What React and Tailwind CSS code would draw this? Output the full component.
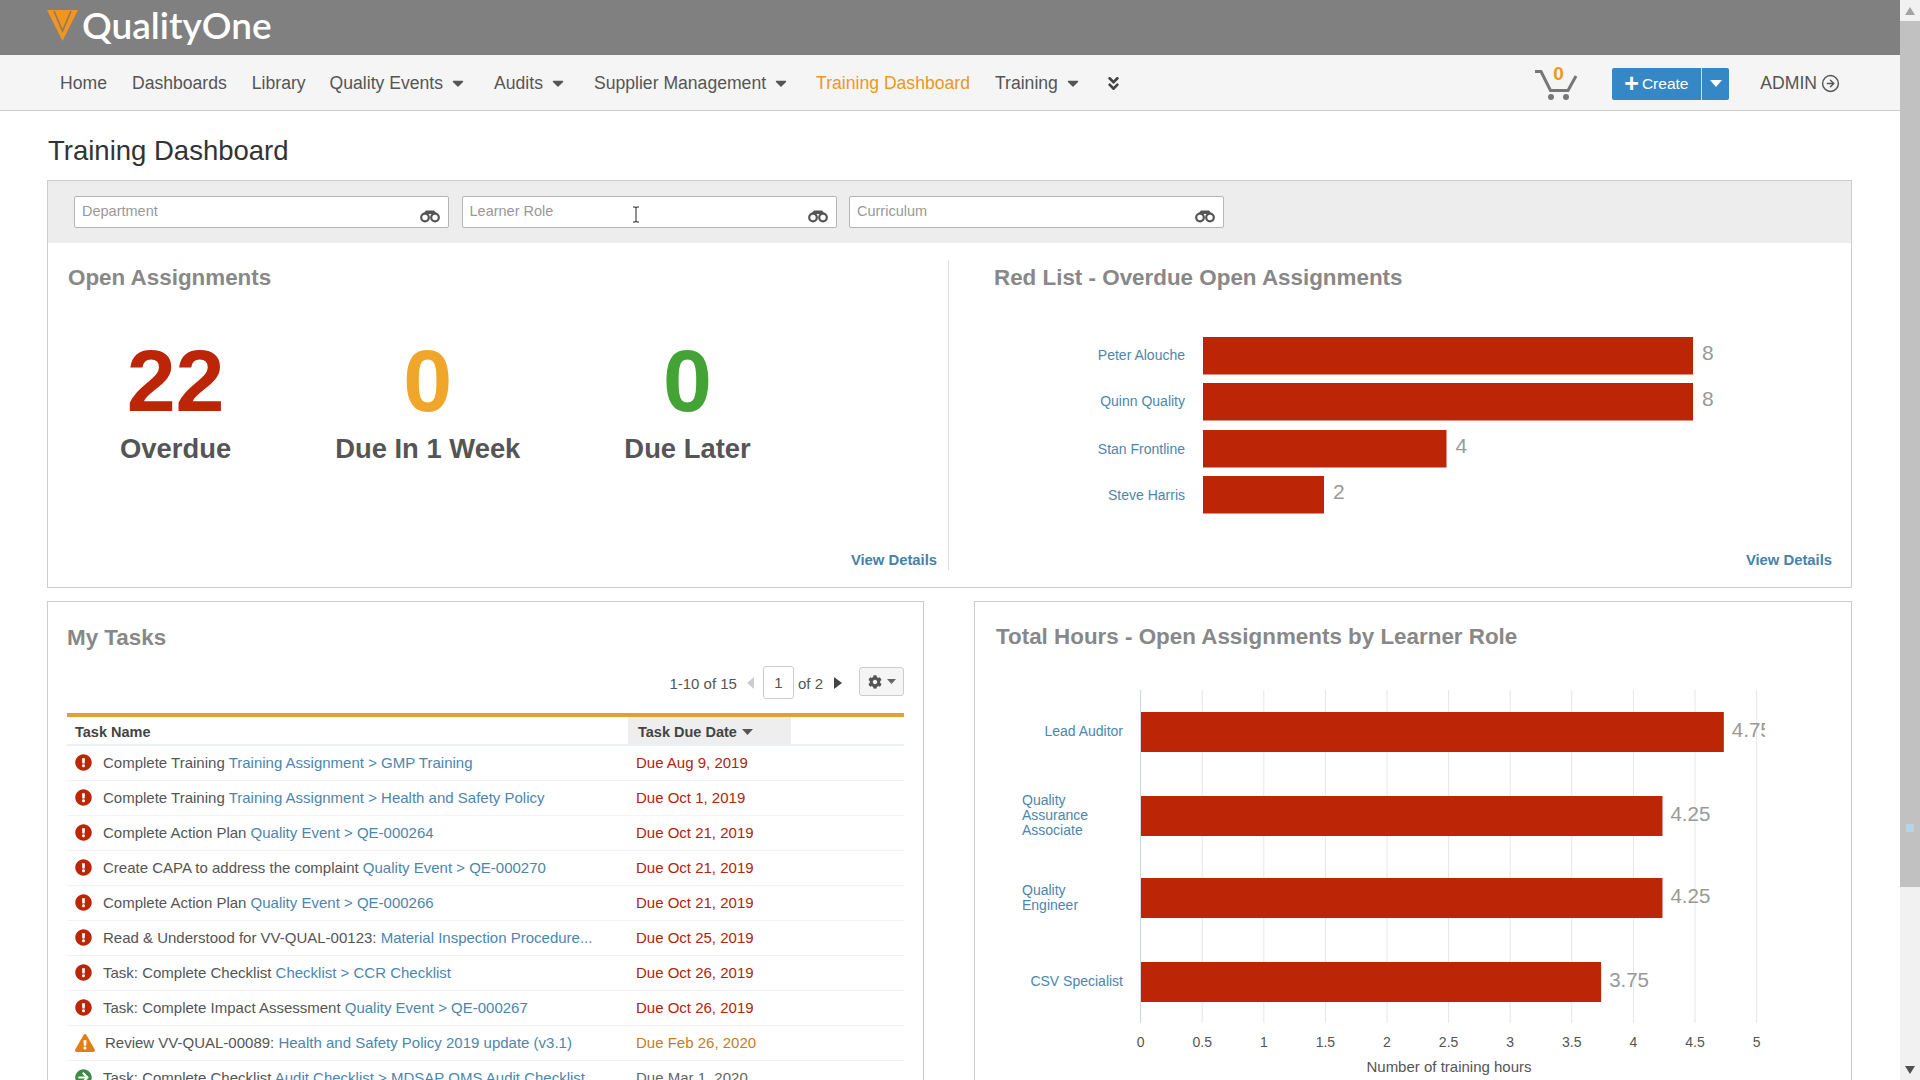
import React from 'react';
import { CircleArrowRight } from 'lucide-react';
import { FaCog, FaExclamationCircle, FaExclamationTriangle, FaArrowCircleRight, FaAngleDoubleDown, FaCaretDown } from 'react-icons/fa';

const navItems = [
  { label: 'Home', gap: 'mr-[25px]' },
  { label: 'Dashboards', gap: 'mr-[25px]' },
  { label: 'Library', gap: 'mr-[24px]' },
  { label: 'Quality Events', caret: true, gap: 'mr-[27px]' },
  { label: 'Audits', caret: true, gap: 'mr-[27px]' },
  { label: 'Supplier Management', caret: true, gap: 'mr-[26px]' },
  { label: 'Training Dashboard', active: true, gap: 'mr-[25px]' },
  { label: 'Training', caret: true, gap: 'mr-[23px]' },
];

const tasks = [
  { icon: 'red', text: 'Complete Training ', link: 'Training Assignment > GMP Training', due: 'Due Aug 9, 2019' },
  { icon: 'red', text: 'Complete Training ', link: 'Training Assignment > Health and Safety Policy', due: 'Due Oct 1, 2019' },
  { icon: 'red', text: 'Complete Action Plan ', link: 'Quality Event > QE-000264', due: 'Due Oct 21, 2019' },
  { icon: 'red', text: 'Create CAPA to address the complaint ', link: 'Quality Event > QE-000270', due: 'Due Oct 21, 2019' },
  { icon: 'red', text: 'Complete Action Plan ', link: 'Quality Event > QE-000266', due: 'Due Oct 21, 2019' },
  { icon: 'red', text: 'Read & Understood for VV-QUAL-00123: ', link: 'Material Inspection Procedure...', due: 'Due Oct 25, 2019' },
  { icon: 'red', text: 'Task: Complete Checklist ', link: 'Checklist > CCR Checklist', due: 'Due Oct 26, 2019' },
  { icon: 'red', text: 'Task: Complete Impact Assessment ', link: 'Quality Event > QE-000267', due: 'Due Oct 26, 2019' },
  { icon: 'warn', text: 'Review VV-QUAL-00089: ', link: 'Health and Safety Policy 2019 update (v3.1)', due: 'Due Feb 26, 2020' },
  { icon: 'ok', text: 'Task: Complete Checklist ', link: 'Audit Checklist > MDSAP QMS Audit Checklist', due: 'Due Mar 1, 2020' },
];

const redList = [
  { name: 'Peter Alouche', value: 8, width: 490, y: 337, labelY: 360 },
  { name: 'Quinn Quality', value: 8, width: 490, y: 383, labelY: 406 },
  { name: 'Stan Frontline', value: 4, width: 243.5, y: 430, labelY: 454 },
  { name: 'Steve Harris', value: 2, width: 121, y: 476, labelY: 500 },
];

const hours = [
  { lines: ['Lead Auditor'], value: 4.75, y: 712 },
  { lines: ['Quality', 'Assurance', 'Associate'], value: 4.25, y: 796 },
  { lines: ['Quality', 'Engineer'], value: 4.25, y: 878 },
  { lines: ['CSV Specialist'], value: 3.75, y: 962 },
];

const ticks = [0, 0.5, 1, 1.5, 2, 2.5, 3, 3.5, 4, 4.5, 5];

const Binoculars = () => (
  <svg width="20" height="14" viewBox="0 0 20 14" className="absolute right-[8px] bottom-[4px]">
    <circle cx="5" cy="8.5" r="3.8" fill="none" stroke="#555" strokeWidth="2.2" />
    <circle cx="15" cy="8.5" r="3.8" fill="none" stroke="#555" strokeWidth="2.2" />
    <path d="M3 5 L6 1.5 H14 L17 5 Z" fill="#555" />
  </svg>
);

const FilterInput = ({ label, cursor }) => (
  <div className="relative w-[375px] h-[32px] bg-white border border-[#b5b5b5] rounded-[2px] pl-[7px] text-[14.5px] leading-[29px] text-[#999]">
    {label}
    {cursor && (
      <svg width="10" height="17" viewBox="0 0 10 17" className="absolute left-[168px] top-[9px]">
        <path d="M2 1 H4.5 L5 2 L5.5 1 H8 M5 2 V15 M2 16 H4.5 L5 15 L5.5 16 H8" fill="none" stroke="#222" strokeWidth="1" />
      </svg>
    )}
    <Binoculars />
  </div>
);

const Stat = ({ value, label, color }) => (
  <div className="flex flex-col items-center">
    <div className={`text-[88px] leading-[90px] font-bold ${color}`}>{value}</div>
    <div className="text-[27.4px] leading-[32px] font-bold text-[#555] mt-[7px]">{label}</div>
  </div>
);

const TaskIcon = ({ type }) => {
  if (type === 'warn') return <FaExclamationTriangle size={20} className="text-[#e07f18] shrink-0 w-[20px] -mt-[1px]" />;
  if (type === 'ok') return <FaArrowCircleRight size={17} className="text-[#3f8a45] shrink-0 -mt-[2px]" />;
  return <FaExclamationCircle size={17} className="text-[#bd2507] shrink-0 -mt-[2px]" />;
};

function TaskRow({ task }) {
  const dueColor = task.icon === 'red' ? 'text-[#b0250a]' : task.icon === 'warn' ? 'text-[#c47d1f]' : 'text-[#666]';
  return (
    <div className="flex items-center h-[35px] border-b border-[#f3f3f3] pl-[8px] text-[15px]">
      <div className="w-[561px] flex items-center whitespace-nowrap">
        <TaskIcon type={task.icon} />
        <span className={`text-[#555] whitespace-pre ${task.icon === 'warn' ? 'ml-[10px]' : 'ml-[11px]'}`}>
          {task.text}
          <span className="text-[#4c86ae]">{task.link}</span>
        </span>
      </div>
      <span className={dueColor}>{task.due}</span>
    </div>
  );
}

function RedListChart() {
  return (
    <svg viewBox="949 291 902 240" width="902" height="240" className="block">
      {redList.map((r) => (
        <g key={r.name}>
          <text x="1185" y={r.labelY} textAnchor="end" fontSize="14" fill="#4c86ae">{r.name}</text>
          <rect x="1203" y={r.y} width={r.width} height="37.5" fill="#bd2507" />
          <text x={1203 + r.width + 9} y={r.y + 23} fontSize="21" fill="#999">{r.value}</text>
        </g>
      ))}
    </svg>
  );
}

function HoursChart() {
  return (
    <svg viewBox="975 680 876 400" width="876" height="400" className="block">
      <defs>
        <clipPath id="plot-clip"><rect x="975" y="680" width="790" height="400" /></clipPath>
      </defs>
      {ticks.map((t) => (
        <g key={t}>
          <line x1={1140.6 + t * 123.2} x2={1140.6 + t * 123.2} y1="690" y2="1023" stroke={t === 0 ? '#ccd6dc' : '#e6e6e6'} />
          <text x={1140.6 + t * 123.2} y="1047" textAnchor="middle" fontSize="14" fill="#555">{t}</text>
        </g>
      ))}
      {hours.map((h) => (
        <g key={h.y} clipPath="url(#plot-clip)">
          {h.lines.length === 1 ? (
            <text x="1123" y={h.y + 24} textAnchor="end" fontSize="14" fill="#4c86ae">{h.lines[0]}</text>
          ) : (
            h.lines.map((line, i) => (
              <text key={line} x="1022" y={h.y + 24 - (h.lines.length - 1) * 7.5 + i * 15} fontSize="14" fill="#4c86ae">{line}</text>
            ))
          )}
          <rect x="1141" y={h.y} width={h.value * 122.7} height="40" fill="#bd2507" />
          <text x={1141 + h.value * 122.7 + 8} y={h.y + 25} fontSize="20.5" fill="#999">{h.value}</text>
        </g>
      ))}
      <text x="1449" y="1072" textAnchor="middle" fontSize="15" fill="#555">Number of training hours</text>
    </svg>
  );
}

const Tri = ({ points, color, w, h }) => (
  <svg width={w} height={h} viewBox={`0 0 ${w} ${h}`} className="shrink-0"><polygon points={points} fill={color} /></svg>
);

export default function App() {
  return (
    <div className="w-[1920px] h-[1080px] overflow-hidden flex bg-white font-['Liberation_Sans',Arial,sans-serif]">
      <div className="w-[1900px] shrink-0">
        {/* top bar */}
        <div className="h-[55px] bg-[#808080] flex items-start pl-[47px] pt-[10px]">
          <svg width="32" height="32" viewBox="0 0 32 32" className="shrink-0">
            <polygon points="0,0 31,0 15.5,31" fill="#f09422" />
            <path d="M7 1 L15.5 21 L24 1" fill="none" stroke="#8a7a60" strokeWidth="1.5" />
          </svg>
          <span className="ml-[3px] -mt-[7px] text-[37px] leading-[44px] font-['Lato',sans-serif] font-semibold text-white">QualityOne</span>
        </div>

        {/* nav */}
        <div className="h-[56px] bg-[#f5f5f5] border-b border-[#ccc] flex items-center pl-[60px] pt-[2px] text-[17.6px] text-[#555]">
          {navItems.map((item) => (
            <div key={item.label} className={`flex items-center ${item.gap}`}>
              <span className={item.active ? 'text-[#f0961e]' : ''}>{item.label}</span>
              {item.caret && <FaCaretDown size={18} className="ml-[6px] text-[#555]" />}
            </div>
          ))}
          <FaAngleDoubleDown size={17} className="text-[#444]" />

          <div className="ml-auto flex items-center h-full">
            <div className="relative w-[46px] h-[34px] mr-[33px]">
              <svg width="46" height="34" viewBox="0 0 46 34">
                <path d="M2 4.5 H8 L17.5 23.5 H35 L43 9" fill="none" stroke="#777" strokeWidth="3" />
                <circle cx="18" cy="30" r="3" fill="#777" />
                <circle cx="33" cy="30" r="3" fill="#777" />
              </svg>
              <span className="absolute left-[20px] -top-[3px] text-[19px] leading-[20px] font-bold text-[#f0961e]">0</span>
            </div>
            <div className="flex h-[32px] w-[117px] rounded-[2px] bg-[#3687c5] text-white text-[15.5px]">
              <div className="flex items-center pl-[12px] w-[90px] border-r border-[#cfe2f0]">
                <span className="text-[25px] leading-[23px] font-bold mr-[3px]">+</span>Create
              </div>
              <div className="flex-1 flex items-center justify-center">
                <Tri points="0,0 12,0 6,7" color="#fff" w={12} h={7} />
              </div>
            </div>
            <span className="ml-[31px] text-[#555]">ADMIN</span>
            <CircleArrowRight size={19} strokeWidth={1.8} className="ml-[4px] mr-[60px] text-[#555]" />
          </div>
        </div>

        <h1 className="pl-[48px] pt-[23px] pb-[12px] text-[27.5px] leading-[34px] text-[#333]">Training Dashboard</h1>

        {/* open assignments */}
        <div className="ml-[47px] w-[1805px] h-[408px] border border-[#ccc]">
          <div className="h-[62px] bg-[#ededed] flex gap-[12.5px] pl-[26px] pt-[15px]">
            <FilterInput label="Department" />
            <FilterInput label="Learner Role" cursor />
            <FilterInput label="Curriculum" />
          </div>
          <div className="flex mt-[17px] h-[310px]">
            <div className="w-[901px] shrink-0 flex flex-col border-r border-[#ddd]">
              <div className="pl-[20px] pt-[4px] text-[22.4px] leading-[28px] font-bold text-[#888]">Open Assignments</div>
              <div className="flex gap-[104px] pl-[72px] mt-[44px]">
                <Stat value="22" label="Overdue" color="text-[#bd2507]" />
                <Stat value="0" label="Due In 1 Week" color="text-[#f0a62b]" />
                <Stat value="0" label="Due Later" color="text-[#43a435]" />
              </div>
              <div className="mt-auto text-right pr-[11px] text-[14.8px] leading-[20px] font-bold text-[#4682ab]">View Details</div>
            </div>
            <div className="flex-1 flex flex-col">
              <div className="pl-[45px] pt-[4px] text-[22.4px] leading-[28px] font-bold text-[#888]">Red List - Overdue Open Assignments</div>
              <div className="-mt-[1px]"><RedListChart /></div>
              <div className="mt-auto text-right pr-[19px] text-[14.8px] leading-[20px] font-bold text-[#4682ab]">View Details</div>
            </div>
          </div>
        </div>

        {/* bottom row */}
        <div className="ml-[47px] mt-[13px] flex gap-[50px]">
          <div className="w-[877px] h-[600px] border border-[#ccc] pl-[19px] pr-[19px] pt-[22px]">
            <div className="text-[22.4px] leading-[28px] font-bold text-[#888]">My Tasks</div>
            <div className="flex justify-end items-start h-[33px] mt-[14px] text-[15px] text-[#555]">
              <span className="mt-[7px]">1-10 of 15</span>
              <span className="mt-[11px] ml-[10px]"><Tri points="7,0 7,12 0,6" color="#ccc" w={7} h={12} /></span>
              <div className="ml-[9px] w-[31px] h-[33px] pt-[1px] border border-[#ccc] rounded-[3px] flex items-center justify-center">1</div>
              <span className="mt-[7px] ml-[4px]">of 2</span>
              <span className="mt-[11px] ml-[11px]"><Tri points="0,0 8,6 0,12" color="#444" w={8} h={12} /></span>
              <div className="ml-[17px] mt-[1px] w-[45px] h-[29px] border border-[#ccc] rounded-[3px] bg-[#f5f5f5] flex items-center justify-center gap-[5px]">
                <FaCog size={14} className="text-[#555]" />
                <Tri points="0,0 9,0 4.5,5" color="#666" w={9} h={5} />
              </div>
            </div>
            <div className="mt-[14px] h-[4px] bg-[#e89c34]" />
            <div className="flex h-[29px] border-b-2 border-[#eef1f3] text-[14.5px] font-bold text-[#444]">
              <div className="w-[561px] pl-[8px] leading-[30px]">Task Name</div>
              <div className="w-[163px] h-[27px] bg-[#eee] pl-[10px] pt-[2px] leading-[28px] flex items-center gap-[5px]">
                Task Due Date
                <Tri points="0,0 11,0 5.5,6" color="#555" w={11} h={6} />
              </div>
            </div>
            {tasks.map((t) => <TaskRow key={t.link} task={t} />)}
          </div>

          <div className="w-[878px] h-[600px] border border-[#ccc]">
            <div className="pl-[21px] pt-[21px] text-[22.4px] leading-[28px] font-bold text-[#888]">Total Hours - Open Assignments by Learner Role</div>
            <div className="mt-[29px]"><HoursChart /></div>
          </div>
        </div>
      </div>

      {/* page scrollbar */}
      <div className="w-[20px] shrink-0 h-full bg-[#f1f1f1] flex flex-col items-center">
        <div className="h-[21px] flex items-center justify-center shrink-0">
          <Tri points="0,8 5,0 10,8" color="#a3a3a3" w={10} h={8} />
        </div>
        <div className="w-full h-[866px] bg-[#c1c1c1] flex flex-col items-center justify-end pb-[55px]">
          <div className="w-[8px] h-[8px] bg-[#b9d3e6]" />
        </div>
        <div className="mt-auto h-[21px] flex items-center justify-center">
          <Tri points="0,0 10,0 5,8" color="#505050" w={10} h={8} />
        </div>
      </div>
    </div>
  );
}
